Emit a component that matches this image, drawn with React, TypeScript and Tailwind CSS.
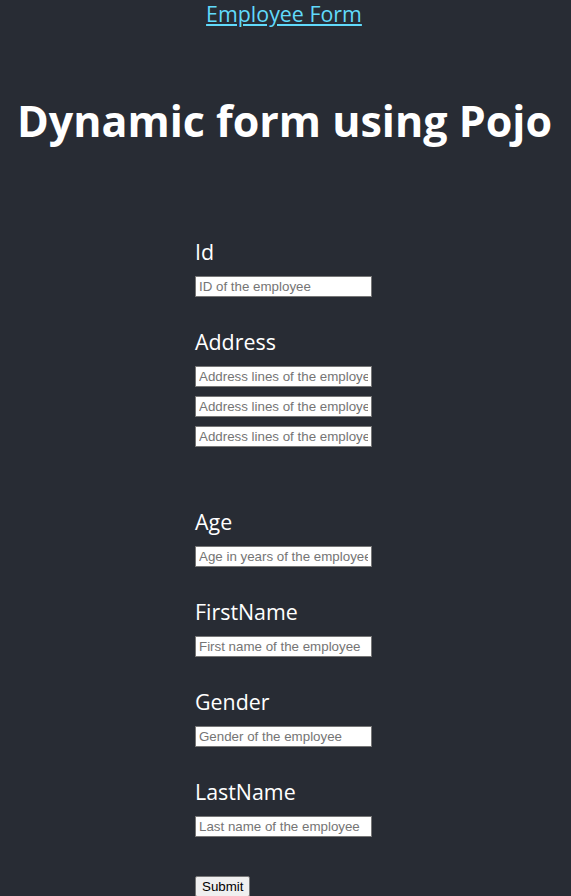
import React from 'react';

const fields: { label: string; placeholders: string[] }[] = [
  { label: 'Id', placeholders: ['ID of the employee'] },
  {
    label: 'Address',
    placeholders: [
      'Address lines of the employee',
      'Address lines of the employee',
      'Address lines of the employee',
    ],
  },
  { label: 'Age', placeholders: ['Age in years of the employee'] },
  { label: 'FirstName', placeholders: ['First name of the employee'] },
  { label: 'Gender', placeholders: ['Gender of the employee'] },
  { label: 'LastName', placeholders: ['Last name of the employee'] },
];

const sans = "font-['Open_Sans',sans-serif]";
const arial = "font-['Liberation_Sans',Arial,sans-serif]";

export default function App() {
  return (
    <div className={`min-h-screen bg-[#282c34] text-white ${sans}`}>
      <div className="pr-[3px] text-center text-[21.4px] leading-[28px]">
        <a href="#" className="text-[#61dafb] underline">
          Employee Form
        </a>
      </div>

      <h1 className="mt-[64px] pr-[2px] text-center text-[43px] font-bold leading-[58px]">
        Dynamic form using Pojo
      </h1>

      <form className="mx-auto mt-[87px] w-[181px]" onSubmit={(e) => e.preventDefault()}>
        {fields.map((f, i) => (
          <div key={f.label} className={i === 0 ? '' : f.label === 'Age' ? 'mt-[60px]' : 'mt-[30px]'}>
            <div className="text-[21.4px] leading-[29px]">{f.label}</div>
            <div className="mt-[10px] flex flex-col gap-[9px]">
              {f.placeholders.map((p, j) => (
                <input
                  key={j}
                  type="text"
                  placeholder={p}
                  className={`block h-[21px] w-[177px] border border-[#767676] bg-white px-[3px] text-[13.33px] text-black placeholder:text-[#757575] ${arial}`}
                />
              ))}
            </div>
          </div>
        ))}
        <button
          type="submit"
          className={`mt-[39px] block h-[21px] rounded-[2px] border border-[#767676] bg-[#efefef] px-[6px] text-[13.33px] text-black ${arial}`}
        >
          Submit
        </button>
      </form>
    </div>
  );
}
